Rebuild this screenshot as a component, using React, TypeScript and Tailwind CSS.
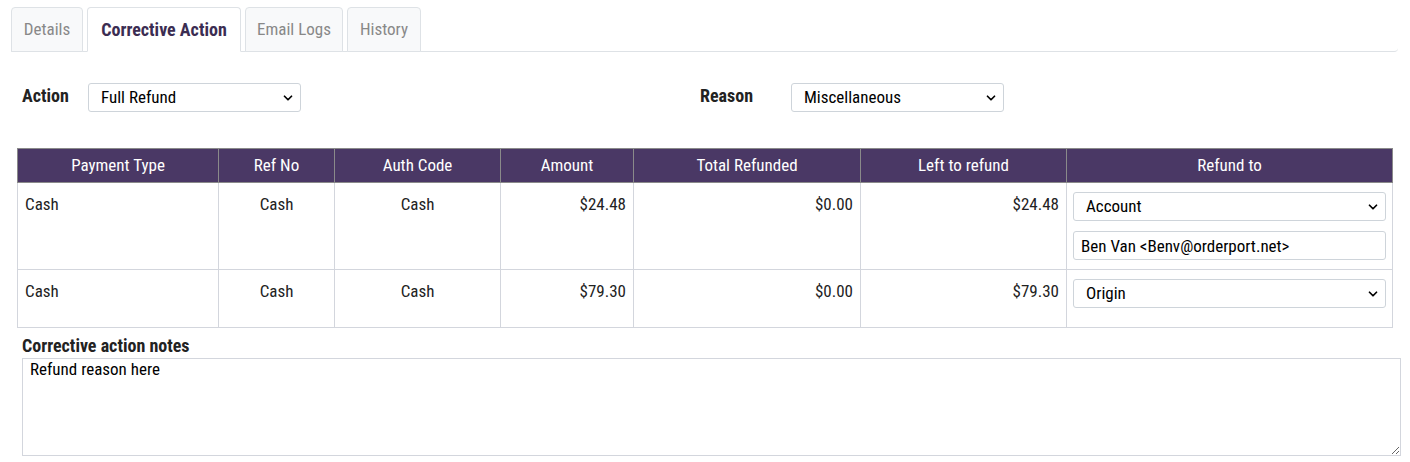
import { ChevronDown } from "lucide-react";

function Select({ value, className }: { value: string; className?: string }) {
  return (
    <div className={`relative ${className ?? ""}`}>
      <select
        defaultValue={value}
        className="w-full h-[29px] appearance-none rounded-[3px] border border-[#ced4da] bg-white pl-3 pr-8 text-[17px] text-black outline-none"
      >
        <option>{value}</option>
      </select>
      <ChevronDown
        className="pointer-events-none absolute right-[6px] top-[8px] h-[14px] w-[14px] text-black"
        strokeWidth={3}
      />
    </div>
  );
}

const tabs = [
  { label: "Details", w: "w-[72px]" },
  { label: "Corrective Action", w: "w-[154px]", active: true },
  { label: "Email Logs", w: "w-[98px]" },
  { label: "History", w: "w-[74px]" },
];

const headers = ["Payment Type", "Ref No", "Auth Code", "Amount", "Total Refunded", "Left to refund", "Refund to"];

const rows = [
  { type: "Cash", ref: "Cash", auth: "Cash", amount: "$24.48", refunded: "$0.00", left: "$24.48", to: "Account", email: true },
  { type: "Cash", ref: "Cash", auth: "Cash", amount: "$79.30", refunded: "$0.00", left: "$79.30", to: "Origin", email: false },
];

export default function App() {
  return (
    <div className="bg-white w-[1410px] h-[462px] overflow-hidden text-[17px] text-[#222] font-[Roboto,sans-serif] font-stretch-condensed">
      <div className="pt-[7px] pl-[11px] pr-[12px]">
        <div className="flex gap-[4px] border-b border-[#dee2e6] rounded-br-[4px]">
          {tabs.map((t) => (
            <div
              key={t.label}
              className={`${t.w} h-[45px] -mb-px flex items-center justify-center rounded-t-[4px] border border-[#dee2e6] ${
                t.active ? "border-b-white bg-white font-bold text-[18px] text-[#3b2d52]" : "bg-[#f8f9fa] text-[#888]"
              }`}
            >
              {t.label}
            </div>
          ))}
        </div>
      </div>

      <div className="flex items-start pt-[31px] pl-[22px]">
        <div className="flex items-start w-[678px]">
          <span className="w-[66px] font-bold text-[18px] leading-[26px]">Action</span>
          <Select value="Full Refund" className="w-[213px]" />
        </div>
        <div className="flex items-start">
          <span className="w-[91px] font-bold text-[18px] leading-[26px]">Reason</span>
          <Select value="Miscellaneous" className="w-[213px]" />
        </div>
      </div>

      <div className="pl-[17px] pt-[36px]">
        <table className="w-[1375px] border-collapse table-fixed">
          <colgroup>
            <col className="w-[201px]" />
            <col className="w-[116px]" />
            <col className="w-[166px]" />
            <col className="w-[133px]" />
            <col className="w-[227px]" />
            <col className="w-[206px]" />
            <col className="w-[326px]" />
          </colgroup>
          <thead>
            <tr className="bg-[#4a3865] text-white h-[34px]">
              {headers.map((h) => (
                <th key={h} className="border border-[#8a8a8a] font-normal text-center px-2 py-0">
                  {h}
                </th>
              ))}
            </tr>
          </thead>
          <tbody>
            {rows.map((r, i) => (
              <tr key={i} className="align-top">
                <td className="border border-[#d3d6dd] px-[7px] pt-[9px]">{r.type}</td>
                <td className="border border-[#d3d6dd] px-[7px] pt-[9px] text-center">{r.ref}</td>
                <td className="border border-[#d3d6dd] px-[7px] pt-[9px] text-center">{r.auth}</td>
                <td className="border border-[#d3d6dd] px-[7px] pt-[9px] text-right">{r.amount}</td>
                <td className="border border-[#d3d6dd] px-[7px] pt-[9px] text-right">{r.refunded}</td>
                <td className="border border-[#d3d6dd] px-[7px] pt-[9px] text-right">{r.left}</td>
                <td className="border border-[#d3d6dd] px-[6px] pt-[9px] pb-[9px]">
                  <Select value={r.to} className="mb-[10px]" />
                  {r.email && (
                    <input
                      defaultValue="Ben Van <Benv@orderport.net>"
                      className="block w-full h-[29px] rounded-[3px] border border-[#ced4da] px-[7px] text-[17px] text-black outline-none"
                    />
                  )}
                </td>
              </tr>
            ))}
          </tbody>
        </table>
      </div>

      <div className="pl-[22px] pr-[9px] pt-[6px]">
        <div className="font-bold text-[18px] leading-[24px]">Corrective action notes</div>
        <textarea
          defaultValue="Refund reason here"
          className="block w-full h-[98px] border border-[#d3d6dd] px-[7px] py-0 text-[17px] leading-[20px] text-black outline-none"
        />
      </div>
    </div>
  );
}
